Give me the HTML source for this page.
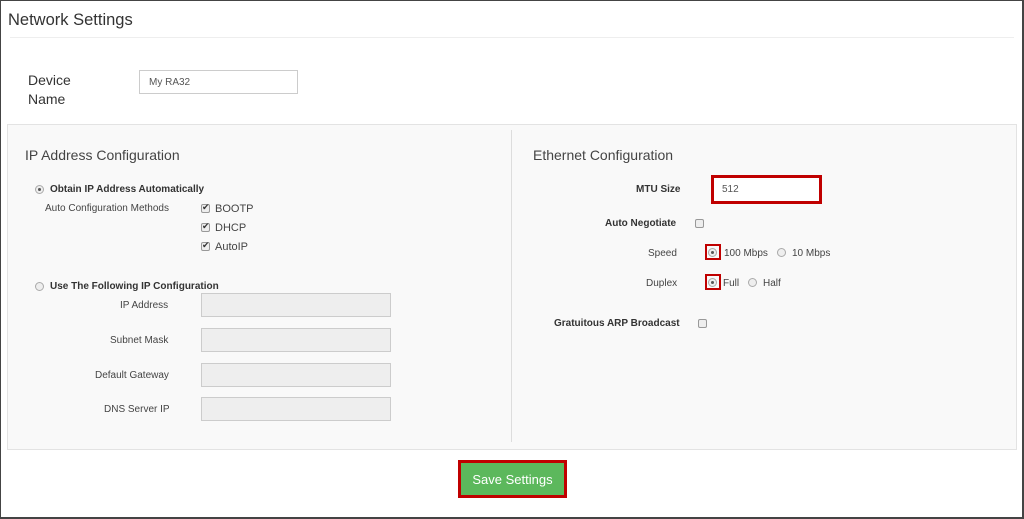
<!DOCTYPE html><html><head><style>
*{box-sizing:border-box;margin:0;padding:0}
body{width:1024px;height:519px;position:relative;background:#fff;font-family:"Liberation Sans",sans-serif;color:#333;overflow:hidden}
.a{position:absolute;white-space:nowrap}
.frame{position:absolute;left:0;top:0;width:1024px;height:519px;border:1px solid #444;border-right:2px solid #444;border-bottom:2px solid #444}
.t{font-size:10px;color:#444}
.b{font-size:10px;font-weight:bold;color:#333}
.inp{position:absolute;background:#eee;border:1px solid #ccc;height:24px;width:190px}
.cb{position:absolute;width:9px;height:9px;border:1px solid #999;border-radius:2px;background:#eee}
.cbk::after{content:"✔";position:absolute;left:0px;top:-3px;font-size:9px;color:#333}
.rd{position:absolute;width:9px;height:9px;border:1px solid #aaa;border-radius:50%;background:#eee}
.rdk::after{content:"";position:absolute;left:2px;top:2px;width:3px;height:3px;border-radius:50%;background:#555}
.red{position:absolute;border:2px solid #c00000}
</style></head><body>
<div class="a" style="left:8px;top:11px;font-size:16.5px;color:#333">Network Settings</div>
<div class="a" style="left:10px;top:37px;width:1004px;height:1px;background:#eee"></div>
<div class="a" style="left:28px;top:71px;font-size:14px;line-height:19px">Device<br>Name</div>
<div class="a" style="left:139px;top:70px;width:159px;height:24px;border:1px solid #ccc;background:#fff;font-size:10px;color:#555;padding:6px 9px">My RA32</div>
<div class="a" style="left:7px;top:124px;width:1010px;height:326px;background:#f9f9f9;border:1px solid #e3e3e3"></div>
<div class="a" style="left:511px;top:130px;width:1px;height:312px;background:#ddd"></div>
<div class="a" style="left:25px;top:147px;font-size:14px;color:#444">IP Address Configuration</div>
<div class="rd rdk" style="left:35px;top:185px"></div>
<div class="a b" style="left:50px;top:184px">Obtain IP Address Automatically</div>
<div class="a t" style="left:45px;top:203px">Auto Configuration Methods</div>
<div class="cb cbk" style="left:201px;top:204px"></div><div class="a t" style="left:215px;top:203px;font-size:11px">BOOTP</div>
<div class="cb cbk" style="left:201px;top:223px"></div><div class="a t" style="left:215px;top:222px;font-size:11px">DHCP</div>
<div class="cb cbk" style="left:201px;top:242px"></div><div class="a t" style="left:215px;top:241px;font-size:11px">AutoIP</div>
<div class="rd" style="left:35px;top:282px"></div>
<div class="a b" style="left:50px;top:281px">Use The Following IP Configuration</div>
<div class="a t" style="left:120px;top:300px">IP Address</div><div class="inp" style="left:201px;top:293px"></div>
<div class="a t" style="left:110px;top:335px">Subnet Mask</div><div class="inp" style="left:201px;top:328px"></div>
<div class="a t" style="left:95px;top:370px">Default Gateway</div><div class="inp" style="left:201px;top:363px"></div>
<div class="a t" style="left:104px;top:404px">DNS Server IP</div><div class="inp" style="left:201px;top:397px"></div>
<div class="a" style="left:533px;top:147px;font-size:14px;color:#444">Ethernet Configuration</div>
<div class="a b" style="left:636px;top:184px">MTU Size</div>
<div class="a" style="left:711px;top:175px;width:111px;height:29px;border:3px solid #c00000;background:#fff;font-size:10px;color:#555;padding:6px 8px">512</div>
<div class="a b" style="left:605px;top:218px">Auto Negotiate</div>
<div class="cb" style="left:695px;top:219px"></div>
<div class="a t" style="left:648px;top:248px">Speed</div>
<div class="red" style="left:705px;top:244px;width:16px;height:16px"></div>
<div class="rd rdk" style="left:708px;top:248px"></div>
<div class="a t" style="left:724px;top:248px">100 Mbps</div>
<div class="rd" style="left:777px;top:248px"></div>
<div class="a t" style="left:792px;top:248px">10 Mbps</div>
<div class="a t" style="left:646px;top:278px">Duplex</div>
<div class="red" style="left:705px;top:274px;width:16px;height:16px"></div>
<div class="rd rdk" style="left:708px;top:278px"></div>
<div class="a t" style="left:723px;top:278px">Full</div>
<div class="rd" style="left:748px;top:278px"></div>
<div class="a t" style="left:763px;top:278px">Half</div>
<div class="a b" style="left:554px;top:318px">Gratuitous ARP Broadcast</div>
<div class="cb" style="left:698px;top:319px"></div>
<div class="a" style="left:458px;top:460px;width:109px;height:38px;border:3px solid #c00000;background:#5cb85c;color:#fff;font-size:13px;text-align:center;line-height:33px">Save Settings</div>
<div class="frame"></div>
</body></html>
